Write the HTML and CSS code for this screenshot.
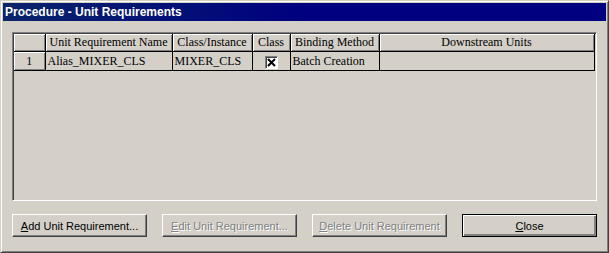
FILE: index.html
```html
<!DOCTYPE html>
<html lang="en">

<head>
  <meta charset="UTF-8">
  <title>Procedure - Unit Requirements</title>
  <link rel="stylesheet" href="styles.css">
</head>

<body>
  <div class="window">
    <div class="title-bar">Procedure - Unit Requirements</div>
    <div class="content">
      <div class="grid">
        <table class="req-table">
          <colgroup>
            <col class="c-row">
            <col class="c-name">
            <col class="c-inst">
            <col class="c-class">
            <col class="c-bind">
            <col class="c-down">
          </colgroup>
          <tr class="head-row">
            <th></th>
            <th>Unit Requirement Name</th>
            <th>Class/Instance</th>
            <th>Class</th>
            <th>Binding Method</th>
            <th>Downstream Units</th>
          </tr>
          <tr>
            <th>1</th>
            <td>Alias_MIXER_CLS</td>
            <td>MIXER_CLS</td>
            <td class="check-cell">
              <span class="check">
                <svg width="9" height="9" viewBox="0 0 9 9">
                  <path d="M1 1 L8 8 M8 1 L1 8" stroke="#000" stroke-width="2"/>
                </svg>
              </span>
            </td>
            <td>Batch Creation</td>
            <td></td>
          </tr>
        </table>
      </div>
      <div class="buttons">
        <button class="btn"><u>A</u>dd Unit Requirement...</button>
        <button class="btn" disabled><u>E</u>dit Unit Requirement...</button>
        <button class="btn" disabled><u>D</u>elete Unit Requirement</button>
        <button class="btn default"><u>C</u>lose</button>
      </div>
    </div>
  </div>
</body>

</html>
```

FILE: styles.css
```css
body {
  margin: 0;
  padding: 0;
  background-color: #d4d0c8;
}

.window {
  box-sizing: border-box;
  width: 609px;
  height: 253px;
  padding: 2px;
  background-color: #d4d0c8;
  border: 1px solid;
  border-color: #d4d0c8 #404040 #404040 #d4d0c8;
  box-shadow: inset 1px 1px #fff, inset -1px -1px #808080;
  display: flex;
  flex-direction: column;
}

.title-bar {
  height: 18px;
  line-height: 18px;
  padding-left: 2px;
  color: #fff;
  font-family: "Liberation Sans", Arial, sans-serif;
  font-weight: bold;
  font-size: 12px;
  background: linear-gradient(to right, #0a246a, #000080 50%);
}

.content {
  flex: 1;
  padding: 11px 9px 13px;
  display: flex;
  flex-direction: column;
  gap: 13px;
}

.grid {
  flex: 1;
  border: 1px solid;
  border-color: #808080 #fff #fff #808080;
  box-shadow: inset 1px 1px #404040, inset -1px -1px #d4d0c8;
  padding: 1px;
}

.req-table {
  table-layout: fixed;
  border-collapse: collapse;
  font-family: "Liberation Serif", serif;
  font-size: 12px;
  color: #000;
}

.c-row { width: 31px; }
.c-name { width: 127px; }
.c-inst { width: 80px; }
.c-class { width: 38px; }
.c-bind { width: 89px; }
.c-down { width: 215px; }

.req-table th,
.req-table td {
  height: 18px;
  padding: 0;
  border-right: 1px solid #000;
  border-bottom: 1px solid #000;
  white-space: nowrap;
  overflow: hidden;
}

.req-table .head-row th {
  height: 17px;
}

.req-table th {
  font-weight: normal;
  text-align: center;
  box-shadow: inset 1px 1px #fff, inset -1px -1px #808080;
}

.req-table td {
  padding-left: 2px;
}

.req-table td.check-cell {
  padding: 0;
  text-align: center;
}

.check {
  display: inline-block;
  box-sizing: border-box;
  width: 13px;
  height: 13px;
  margin-top: 3px;
  background-color: #fff;
  border: 1px solid;
  border-color: #808080 #fff #fff #808080;
  box-shadow: inset 1px 1px #404040;
  line-height: 0;
  padding: 1px 0 0 1px;
  vertical-align: top;
}

.buttons {
  display: flex;
  gap: 15px;
}

.btn {
  box-sizing: border-box;
  width: 135px;
  height: 23px;
  padding: 0;
  font-family: "Liberation Sans", Arial, sans-serif;
  font-size: 11px;
  color: #000;
  background-color: #d4d0c8;
  border: 1px solid;
  border-color: #fff #404040 #404040 #fff;
  box-shadow: inset -1px -1px #808080;
}

.btn:disabled {
  color: #808080;
  text-shadow: 1px 1px #fff;
}

.btn.default {
  border: 1px solid #000;
  box-shadow: inset 1px 1px #fff, inset -2px -2px #808080, inset -1px -1px #404040;
}
```
